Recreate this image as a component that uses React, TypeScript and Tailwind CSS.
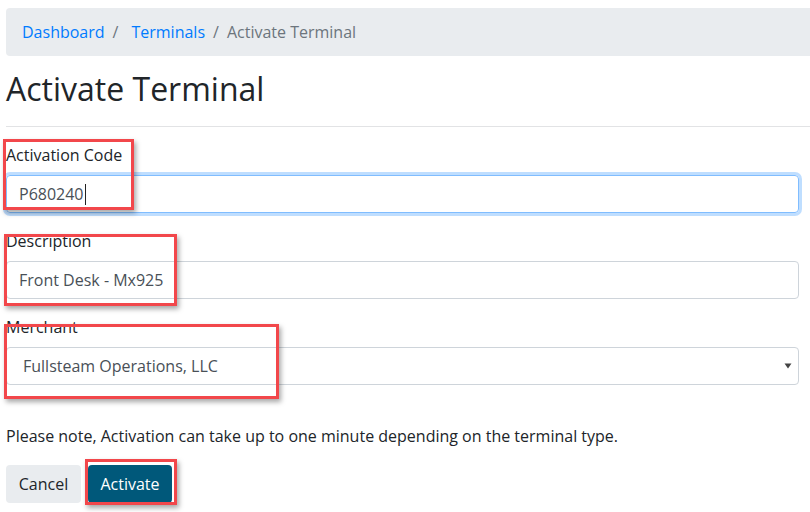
import React from "react";

export default function App() {
  return (
    <div className="relative w-[810px] h-[512px] overflow-hidden bg-white pl-[6px] pt-[8px] font-['Open_Sans',sans-serif] text-base text-[#212529]">
      {/* Breadcrumb */}
      <nav className="h-[48px] flex items-center pl-4 bg-[#e9ecef] rounded-l-[4px] leading-6">
        <span className="text-[#007bff]">Dashboard</span>
        <span className="px-2 text-[#6c757d]">/</span>
        <span className="ml-[5px] text-[#007bff]">Terminals</span>
        <span className="px-2 text-[#6c757d]">/</span>
        <span className="text-[#6c757d]">Activate Terminal</span>
      </nav>

      {/* Title */}
      <h1 className="mt-[14px] text-[32px] leading-[38px] font-normal text-[#212529]">
        Activate Terminal
      </h1>
      <div className="mt-[18px] border-t border-[#e2e3e5]" />

      {/* Form */}
      <div className="w-[793px] mt-[16px]">
        <div className="mb-4">
          <div className="leading-6 mb-2">Activation Code</div>
          <div className="h-[38px] border border-[#80bdff] rounded-[4px] shadow-[0_0_0_3px_rgba(0,123,255,0.25)] px-3 flex items-center text-[#495057] leading-6">
            <span>P680240</span>
            <span className="inline-block w-px h-[21px] bg-[#222] ml-[1px]" />
          </div>
        </div>

        <div className="mb-4">
          <div className="leading-6 mb-2">Description</div>
          <div className="h-[38px] border border-[#ced4da] rounded-[4px] px-3 flex items-center text-[#495057] leading-6">
            Front Desk - Mx925
          </div>
        </div>

        <div>
          <div className="leading-6 mb-2">Merchant</div>
          <div className="h-[38px] border border-[#ced4da] rounded-[4px] pl-[16px] pr-[6px] flex items-center justify-between text-[#495057] leading-6">
            <span>Fullsteam Operations, LLC</span>
            <svg width="8" height="6" viewBox="0 0 8 6">
              <polygon points="0.5,0.5 7.5,0.5 4,5.5" fill="#444" />
            </svg>
          </div>
        </div>

        <p className="mt-[39px] leading-6 text-[#212529]">
          Please note, Activation can take up to one minute depending on the terminal type.
        </p>

        <div className="mt-[17px] flex items-center">
          <button className="h-[38px] w-[75px] rounded-[4px] bg-[#e9ecef] text-[#212529] leading-6">
            Cancel
          </button>
          <button className="ml-[7px] h-[38px] w-[84px] rounded-[4px] bg-[#00587a] text-white leading-6">
            Activate
          </button>
        </div>
      </div>

      {/* Red annotation boxes */}
      <div className="absolute left-[3px] top-[139px] w-[131px] h-[71px] border-[3px] border-[#f2474b] shadow-[2px_3px_5px_rgba(0,0,0,0.35)]" />
      <div className="absolute left-[4px] top-[234px] w-[173px] h-[72px] border-[3px] border-[#f2474b] shadow-[2px_3px_5px_rgba(0,0,0,0.35)]" />
      <div className="absolute left-[4px] top-[324px] w-[275px] h-[75px] border-[3px] border-[#f2474b] shadow-[2px_3px_5px_rgba(0,0,0,0.35)]" />
      <div className="absolute left-[85px] top-[459px] w-[92px] h-[46px] border-[3px] border-[#f2474b] shadow-[2px_3px_5px_rgba(0,0,0,0.35)]" />
    </div>
  );
}
